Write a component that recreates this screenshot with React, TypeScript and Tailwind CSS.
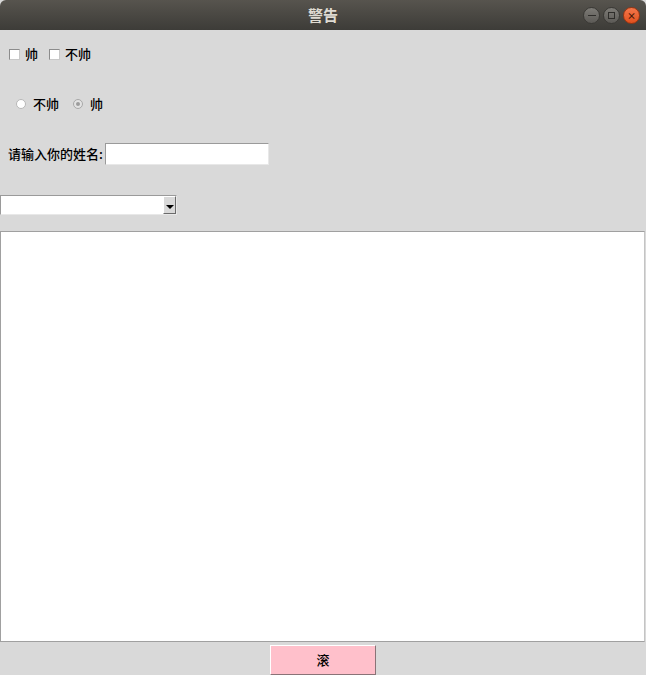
import React from 'react';

const font = { fontFamily: '"Noto Sans CJK SC", "DejaVu Sans", sans-serif' };

function TitleBar() {
  return (
    <div className="relative h-[30px] flex items-center justify-center bg-gradient-to-b from-[#57544e] to-[#3d3c38] rounded-t-[6px]">
      <span className="text-[15px] font-bold text-[#dfdbd2]">警告</span>
      <div className="absolute right-[6px] top-[7px] flex gap-[3px]">
        <div className="w-[17px] h-[17px] rounded-full bg-gradient-to-b from-[#7d7b76] to-[#5c5a56] border border-[#3a3935] flex items-center justify-center">
          <div className="w-[8px] h-[1.5px] bg-[#2e2d2a]" />
        </div>
        <div className="w-[17px] h-[17px] rounded-full bg-gradient-to-b from-[#7d7b76] to-[#5c5a56] border border-[#3a3935] flex items-center justify-center">
          <div className="w-[7px] h-[7px] border border-[#2e2d2a]" />
        </div>
        <div className="w-[17px] h-[17px] rounded-full bg-gradient-to-b from-[#f4774a] to-[#e0501c] border border-[#9c3511] flex items-center justify-center text-[9px] leading-none font-bold text-[#4a1a08]">
          ×
        </div>
      </div>
    </div>
  );
}

function Check({ label }: { label: string }) {
  return (
    <div className="flex items-center gap-[5px]">
      <div className="w-[11px] h-[11px] bg-white border border-t-[#8c8c8c] border-l-[#8c8c8c] border-b-[#c8c8c8] border-r-[#c8c8c8]" />
      <span>{label}</span>
    </div>
  );
}

export default function App() {
  return (
    <div
      className="w-[646px] h-[675px] bg-[#d9d9d9] flex flex-col text-[13px] font-medium text-black overflow-hidden"
      style={font}
    >
      <TitleBar />

      <div className="mt-[12px] h-[24px] flex items-center pl-[9px] gap-[11px]">
        <Check label="帅" />
        <Check label="不帅" />
      </div>

      <div className="mt-[26px] h-[24px] flex items-center pl-[16px] gap-[14px]">
        <div className="flex items-center gap-[7px]">
          <div className="w-[10px] h-[10px] rounded-full bg-white border border-[#b8b8b8]" />
          <span>不帅</span>
        </div>
        <div className="flex items-center gap-[7px]">
          <div className="w-[10px] h-[10px] rounded-full bg-[#e2e2e2] border border-[#a8a8a8] flex items-center justify-center">
            <div className="w-[4px] h-[4px] rounded-full bg-[#9c9c9c]" />
          </div>
          <span>帅</span>
        </div>
      </div>

      <div className="mt-[27px] h-[22px] flex items-center pl-[8px]">
        <span className="w-[97px]">请输入你的姓名:</span>
        <input className="w-[164px] h-[22px] bg-white border border-t-[#9a9a9a] border-l-[#9a9a9a] border-b-[#e8e8e8] border-r-[#e8e8e8] outline-none" />
      </div>

      <div className="mt-[30px] h-[20px] w-[177px] flex bg-white border border-t-[#9a9a9a] border-l-[#9a9a9a] border-b-[#e8e8e8] border-r-[#e8e8e8]">
        <div className="flex-1" />
        <div className="w-[13px] h-full bg-[#d9d9d9] border border-t-white border-l-white border-b-[#6a6a6a] border-r-[#6a6a6a] flex items-center justify-center">
          <div className="w-0 h-0 border-l-[4px] border-r-[4px] border-t-[4px] border-l-transparent border-r-transparent border-t-black mt-[3px]" />
        </div>
      </div>

      <div className="mt-[16px] h-[411px] w-[645px] bg-white border border-[#a0a0a0] border-r-[#c4c4c4]" />

      <div className="mt-[3px] flex justify-center">
        <button className="w-[106px] h-[30px] bg-[#ffc0cb] border border-t-white border-l-white border-b-[#8a7377] border-r-[#8a7377] text-[13px] font-medium">
          滚
        </button>
      </div>
    </div>
  );
}
